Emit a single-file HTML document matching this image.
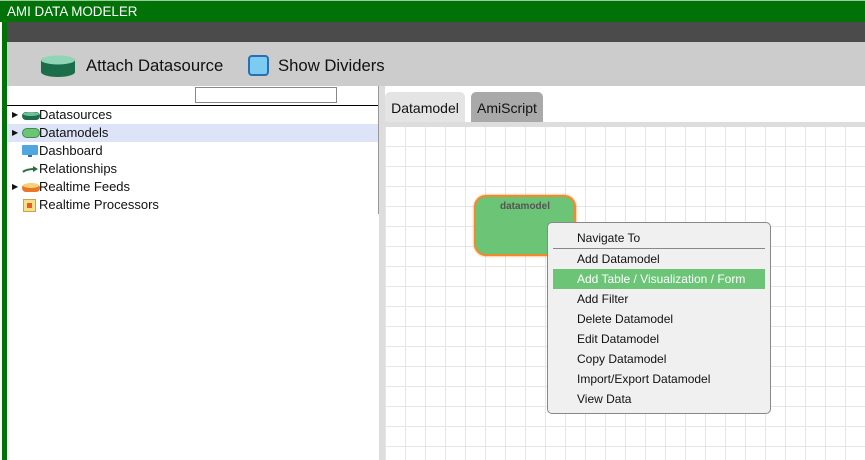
<!DOCTYPE html>
<html><head><style>
*{margin:0;padding:0;box-sizing:border-box}
body{width:865px;height:460px;overflow:hidden;background:#fff;font-family:"Liberation Sans",Arial,sans-serif;position:relative}
.a{position:absolute}
.tree div{position:absolute;left:0;height:18px;width:371px;font-size:13px;color:#111;line-height:18px}
.menu div{position:absolute;left:5px;width:212px;height:20px;line-height:20px;font-size:12px;color:#111;padding-left:24px}
</style></head><body>
<div class="a" style="left:0;top:0;width:865px;height:1px;background:#9c9"></div>
<div class="a" style="left:0;top:1px;width:865px;height:21px;background:#007208"></div>
<div class="a" style="left:7px;top:4px;font-size:13.4px;color:#fff;line-height:16px">AMI DATA MODELER</div>
<div class="a" style="left:2px;top:22px;width:5px;height:438px;background:#007208"></div>
<div class="a" style="left:7px;top:22px;width:858px;height:20px;background:#4b4b4b"></div>
<div class="a" style="left:7px;top:42px;width:858px;height:44px;background:#ccc"></div>
<svg class="a" style="left:40px;top:54px" width="36" height="24"><ellipse cx="18" cy="18" rx="17" ry="5" fill="#1b6e49"/><rect x="1" y="6" width="34" height="12" fill="#1b6e49"/><ellipse cx="18" cy="6" rx="17" ry="4.5" fill="#8fd5b6"/></svg>
<div class="a" style="left:86px;top:56px;font-size:16.7px;color:#111">Attach Datasource</div>
<div class="a" style="left:248px;top:55px;width:21px;height:21px;border:2px solid #2a6fb0;border-radius:4px;background:#7ccbf2"></div>
<div class="a" style="left:278px;top:56px;font-size:16.7px;color:#111">Show Dividers</div>
<div class="a" style="left:195px;top:87px;width:142px;height:16px;border:1px solid #888;background:#fff"></div>
<div class="a" style="left:7px;top:105px;width:371px;height:1px;background:#000"></div>
<div class="a" style="left:378px;top:86px;width:2px;height:128px;background:#999"></div>
<div class="tree a" style="left:7px;top:106px">
<div style="top:0"><span class="a" style="left:5px;top:0;font-size:8px">&#9654;</span><svg class="a" style="left:15px;top:5px" width="18" height="10"><rect x="0" y="1" width="18" height="8" rx="4" fill="#1b6e49"/><ellipse cx="9" cy="3" rx="8" ry="2" fill="#6fbf9a"/></svg><span class="a" style="left:32px">Datasources</span></div>
<div style="top:18px;background:#dde4f8"><span class="a" style="left:5px;top:0;font-size:8px">&#9654;</span><svg class="a" style="left:15px;top:4px" width="18" height="10"><rect x="0.5" y="0.5" width="17" height="9" rx="4.5" fill="#6cc477" stroke="#3d8f47"/></svg><span class="a" style="left:32px">Datamodels</span></div>
<div style="top:36px"><svg class="a" style="left:15px;top:3px" width="16" height="13"><rect x="0" y="0" width="16" height="10" rx="1" fill="#52a6e0"/><rect x="6" y="10" width="4" height="2" fill="#2a6fb0"/></svg><span class="a" style="left:32px">Dashboard</span></div>
<div style="top:54px"><svg class="a" style="left:15px;top:4px" width="16" height="10"><path d="M1 8 Q4 5 13 5" stroke="#2b6e3c" stroke-width="2" fill="none"/><path d="M11 2 L16 5 L11 8Z" fill="#2b6e3c"/></svg><span class="a" style="left:32px">Relationships</span></div>
<div style="top:72px"><span class="a" style="left:5px;top:0;font-size:8px">&#9654;</span><svg class="a" style="left:15px;top:4px" width="18" height="11"><rect x="0" y="2" width="18" height="8" rx="4" fill="#ea7628"/><ellipse cx="9" cy="3.5" rx="8" ry="2.5" fill="#f4d27a"/></svg><span class="a" style="left:32px">Realtime Feeds</span></div>
<div style="top:90px"><svg class="a" style="left:16px;top:3px" width="13" height="13"><rect x="0.5" y="0.5" width="12" height="12" fill="#f8e08a" stroke="#c9a640"/><rect x="4" y="4" width="5" height="5" fill="#ea5a28"/></svg><span class="a" style="left:32px">Realtime Processors</span></div>
</div>
<div class="a" style="left:379px;top:86px;width:6px;height:374px;background:#ddd"></div>
<div class="a" style="left:385px;top:92px;width:80px;height:30px;background:#e4e4e4;border-radius:5px 5px 0 0;font-size:14px;line-height:32px;text-align:center;color:#111">Datamodel</div>
<div class="a" style="left:471px;top:92px;width:72px;height:30px;background:#a9a9a9;border-radius:5px 5px 0 0;font-size:14px;line-height:32px;text-align:center;color:#111">AmiScript</div>
<div class="a" style="left:385px;top:122px;width:480px;height:5px;background:#ddd"></div>
<div class="a" style="left:385px;top:127px;width:480px;height:333px;background-color:#fff;background-image:linear-gradient(to right,#e6e6e6 1px,transparent 1px),linear-gradient(to bottom,#e6e6e6 1px,transparent 1px);background-size:20px 20px;background-position:0px -1px"></div>
<div class="a" style="left:474px;top:195px;width:102px;height:61px;background:#6cc477;border:2px solid #f08a2c;border-radius:12px;box-shadow:0 0 2px #f08a2c"></div>
<div class="a" style="left:474px;top:201px;width:102px;text-align:center;font-size:10px;font-weight:bold;color:#555">datamodel</div>
<div class="menu a" style="left:547px;top:222px;width:224px;height:192px;background:#f0f0f0;border:1px solid #888;border-radius:5px">
<div style="top:5px">Navigate To</div>
<div style="top:25px;height:1px;background:#888;left:5px;width:212px;padding:0"></div>
<div style="top:26px">Add Datamodel</div>
<div style="top:46px;background:#6cc477;color:#fff">Add Table / Visualization / Form</div>
<div style="top:66px">Add Filter</div>
<div style="top:86px">Delete Datamodel</div>
<div style="top:106px">Edit Datamodel</div>
<div style="top:126px">Copy Datamodel</div>
<div style="top:146px">Import/Export Datamodel</div>
<div style="top:166px">View Data</div>
</div>
</body></html>
